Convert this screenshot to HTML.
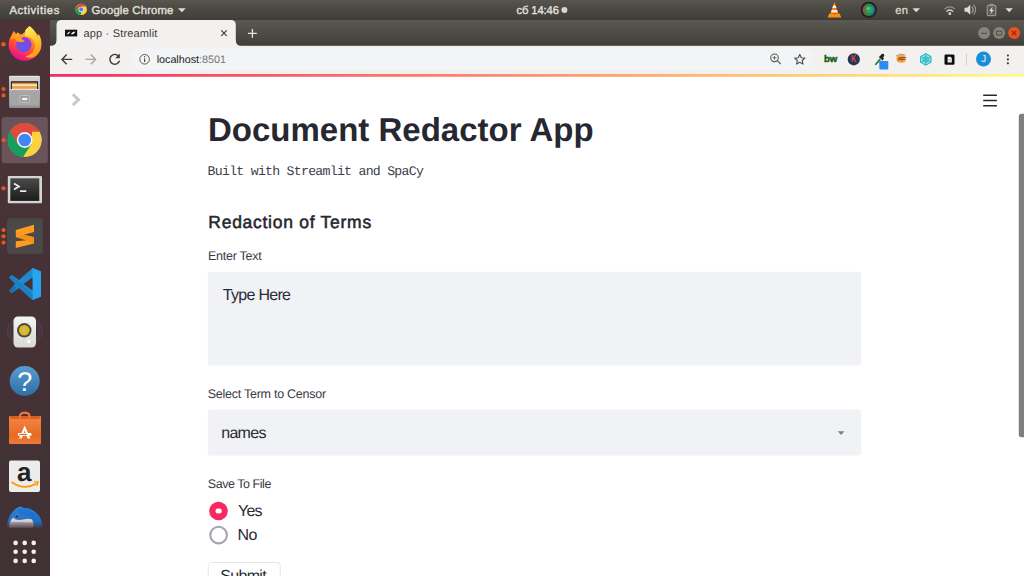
<!DOCTYPE html>
<html lang="en">
<head>
<meta charset="utf-8">
<title>app · Streamlit</title>
<style>
*{box-sizing:border-box;margin:0;padding:0}
html,body{width:1024px;height:576px;overflow:hidden;background:#fff;font-family:"Liberation Sans",sans-serif;text-rendering:geometricPrecision}
body{position:relative}
.abs{position:absolute}
#topbar{left:0;top:0;width:1024px;height:20px;background:linear-gradient(#58554e 0%,#4c4a44 40%,#42413c 85%,#3b3a36 100%);color:#e2e2df;font-weight:normal;-webkit-text-stroke:0.350px #e2e2df;font-size:11.300px;line-height:21px;white-space:nowrap}
#topbar span{position:absolute;top:0.600px}
#dock{left:0;top:20px;width:50px;height:556px;background:#4a3037}
#titlebar{left:50px;top:20px;width:974px;height:26px;background:linear-gradient(#5b5951,#3f3e3a)}
#deco{left:50px;top:74px;width:974px;height:3px;background:linear-gradient(90deg,#f72c63,#fffd80);}
#deco:after{content:"";position:absolute;left:0;top:2px;width:100%;height:1px;background:rgba(255,255,255,0.2)}
#page{left:50px;top:76px;width:974px;height:500px;background:#fff}
#app{color:#262730}
#app div{position:absolute;white-space:nowrap}
h1,h3{position:absolute;white-space:nowrap;color:#262730}
.lbl{font-size:12.500px;line-height:16px;letter-spacing:-0.250px;color:#3a3b45}
.val{font-size:16px;line-height:18px;letter-spacing:-0.700px;color:#2a2b35}
</style>
</head>
<body>
<div id="topbar" class="abs">
  <span id="act" style="left:9.400px;letter-spacing:0.600px">Activities</span>
  <span id="gc" style="left:91.500px;letter-spacing:0.180px">Google Chrome</span>
  <span id="clk" style="left:516.500px;letter-spacing:-0.150px">сб 14:46</span>
  <span id="en" style="left:895.200px;letter-spacing:0.300px;-webkit-text-stroke:0.150px #e2e2df">en</span>
</div>
<svg id="topsvg" class="abs" style="left:0;top:0" width="1024" height="20" viewBox="0 0 1024 20">
  <defs>
    <linearGradient id="globeh" x1="0" y1="0" x2="1" y2="0"><stop offset="0" stop-color="#c8402a"/><stop offset="0.35" stop-color="#2a8a4a"/><stop offset="0.65" stop-color="#1f8a5a"/><stop offset="1" stop-color="#2a62c8"/></linearGradient>
    <radialGradient id="globe" cx="0.5" cy="0.5" r="0.5"><stop offset="0" stop-color="#1f9a4a"/><stop offset="0.55" stop-color="#1a7a3e"/><stop offset="0.8" stop-color="#254a8a"/><stop offset="1" stop-color="#111"/></radialGradient>
    <linearGradient id="cone" x1="0" y1="0" x2="1" y2="0"><stop offset="0" stop-color="#ff9a1a"/><stop offset="0.5" stop-color="#ff7a00"/><stop offset="1" stop-color="#f06a00"/></linearGradient>
  </defs>
  <!-- chrome mini icon -->
  <g transform="translate(81.200,9.400)">
    <circle r="5.700" fill="#fdd23f"/>
    <path d="M-4.940 -2.850 A5.700 5.700 0 0 1 4.940 -2.850 L0 -2.850 L-2.470 1.420 Z" fill="#de4a3c"/>
    <path d="M-4.940 -2.850 L-2.470 1.420 L0 2.850 L-0.500 5.680 A5.700 5.700 0 0 1 -4.940 -2.850 Z" fill="#14a05c"/>
    <circle r="2.700" fill="#f4f4f4"/><circle r="2.100" fill="#4286f5"/>
  </g>
  <path d="M178 8.200 L185.800 8.200 L181.900 12.300 Z" fill="#dcdcda"/>
  <circle cx="564.400" cy="10" r="3" fill="#d4d4d2"/>
  <!-- vlc -->
  <path d="M834.400 1.700 L838.300 13.600 L830.500 13.600 Z" fill="url(#cone)"/>
  <path d="M833.200 5.400 L835.600 5.400 L836.400 7.900 L832.400 7.900 Z" fill="#f2f2f2"/>
  <path d="M831.700 10 L837.100 10 L837.900 12.400 L830.900 12.400 Z" fill="#e8e8e8"/>
  <path d="M829.300 13.400 L839.500 13.400 L841.300 17.400 L827.500 17.400 Z" fill="#ff8f0a"/>
  <path d="M830.500 13.400 Q834.400 15.400 838.300 13.400 Z" fill="#e06a00"/>
  <!-- globe -->
  <circle cx="868.800" cy="9.800" r="8.100" fill="#17171b"/>
  <circle cx="868.800" cy="9.800" r="6.200" fill="url(#globeh)"/>
  <circle cx="869.300" cy="9.600" r="3.600" fill="#2aa352"/>
  <circle cx="868.300" cy="8.300" r="1.600" fill="#6fd08a" fill-opacity="0.7"/>
  <circle cx="868.800" cy="9.800" r="7.100" fill="none" stroke="#3a3a40" stroke-width="0.600"/>
  <path d="M912.500 8.200 L920 8.200 L916.250 12.300 Z" fill="#dcdcda"/>
  <!-- wifi -->
  <g fill="none" stroke-width="1.500" stroke-linecap="round">
    <path d="M945 8.800 A7 7 0 0 1 954.600 8.800" stroke="#8f8e89" stroke-width="1.300"/>
    <path d="M947 11.200 A4.200 4.200 0 0 1 952.600 11.200" stroke="#d0d0cc"/>
  </g>
  <circle cx="949.800" cy="13.700" r="1.400" fill="#dcdcda"/>
  <!-- speaker -->
  <path d="M964.500 7.800 L967 7.800 L970.300 4.800 L970.300 14.800 L967 11.800 L964.500 11.800 Z" fill="#dcdcda"/>
  <g fill="none" stroke="#b4b3ae" stroke-width="1.100" stroke-linecap="round">
    <path d="M972 7.200 A3.500 3.500 0 0 1 972 12.400"/>
    <path d="M973.800 5.200 A6.500 6.500 0 0 1 973.800 14.400" stroke-opacity="0.800"/>
  </g>
  <!-- battery -->
  <rect x="987.200" y="5.300" width="8.600" height="10.300" rx="1" fill="#5e5d58" stroke="#95948f" stroke-width="1.200"/>
  <rect x="989.500" y="3.800" width="4" height="1.600" fill="#95948f"/>
  <path d="M992.600 6.500 L989.300 11 L991.300 11 L990.400 14.400 L993.800 9.700 L991.800 9.700 Z" fill="#dededa"/>
  <path d="M1005.400 8.200 L1012.900 8.200 L1009.150 12.300 Z" fill="#dcdcda"/>
</svg>
<svg id="docksvg" class="abs" style="left:0;top:20px" width="50" height="556" viewBox="0 20 50 556">
<defs>
  <linearGradient id="dkbg" x1="0" y1="0" x2="0" y2="1"><stop offset="0" stop-color="#4b3337"/><stop offset="1" stop-color="#403135"/></linearGradient>
  <linearGradient id="ffbody" x1="0.75" y1="0.1" x2="0.3" y2="1"><stop offset="0" stop-color="#ffb52a"/><stop offset="0.3" stop-color="#ff8a24"/><stop offset="0.6" stop-color="#ff4a36"/><stop offset="0.85" stop-color="#f01d78"/><stop offset="1" stop-color="#e0109a"/></linearGradient>
  <linearGradient id="ffflame" x1="0" y1="0" x2="0.3" y2="1"><stop offset="0" stop-color="#fff36a"/><stop offset="0.6" stop-color="#ffc42e"/><stop offset="1" stop-color="#ff9a1f"/></linearGradient>
  <radialGradient id="ffglobe" cx="0.4" cy="0.7" r="0.8"><stop offset="0" stop-color="#5a5cf0"/><stop offset="0.7" stop-color="#8a3fe0"/><stop offset="1" stop-color="#b43bd8"/></radialGradient>
  <linearGradient id="files" x1="0" y1="0" x2="0" y2="1"><stop offset="0" stop-color="#c9c9c9"/><stop offset="1" stop-color="#8c8c8c"/></linearGradient>
  <linearGradient id="term" x1="0" y1="0" x2="0" y2="1"><stop offset="0" stop-color="#4a4a4a"/><stop offset="1" stop-color="#1c1c1c"/></linearGradient>
  <linearGradient id="help" x1="0" y1="0" x2="0" y2="1"><stop offset="0" stop-color="#5a9bd0"/><stop offset="1" stop-color="#2d6ea6"/></linearGradient>
  <linearGradient id="bag" x1="0" y1="0" x2="0" y2="1"><stop offset="0" stop-color="#f0874a"/><stop offset="0.7" stop-color="#ea6a20"/><stop offset="1" stop-color="#ee7a38"/></linearGradient>
  <linearGradient id="spk" x1="0" y1="0" x2="0" y2="1"><stop offset="0" stop-color="#f4f4f2"/><stop offset="1" stop-color="#d8d8d4"/></linearGradient>
  <linearGradient id="tb" x1="0" y1="0" x2="0" y2="1"><stop offset="0" stop-color="#2a8ae0"/><stop offset="0.6" stop-color="#2f6fc4"/><stop offset="1" stop-color="#3a5a9a"/></linearGradient>
  <linearGradient id="tbfade" x1="0" y1="0" x2="0" y2="1"><stop offset="0" stop-color="#413136" stop-opacity="0"/><stop offset="1" stop-color="#413136" stop-opacity="0.8"/></linearGradient>
</defs>
<rect x="0" y="20" width="50" height="556" fill="url(#dkbg)"/>
<!-- firefox -->
<circle cx="3.500" cy="44.300" r="2.300" fill="#e8591c"/>
<circle cx="24.800" cy="44.600" r="16.200" fill="url(#ffbody)"/>
<path d="M7 26 L28.500 25 L26 28.800 L24.600 32.600 L21 34.500 L17.400 32.200 L16.200 34.200 L13.800 30.500 L11.300 35.600 L7 37 Z" fill="#4b3337"/>
<path d="M29.400 26 C25.500 29 24 33 25 36.500 C30 36 34.500 39 35 44.500 C35.500 50.500 31 55.500 25 56.500 C33 60.500 41.500 54 41.500 44 C41.500 39 40 36 38.600 34 C38.300 36 37.500 37 36.800 37.300 C36.300 32.500 33.500 28.500 29.400 26 Z" fill="url(#ffflame)"/>
<circle cx="23.900" cy="44.600" r="7.700" fill="url(#ffglobe)"/>
<path d="M13.800 30.800 C12.500 33 11 36.500 10.500 40 C12 38.500 13.500 38 15 38.200 C16 40.500 18 42.500 20.500 42.300 C22 42.200 23.500 41.800 24.800 41.200 C23.800 40 22.500 39.200 21 39 C22 37.200 24.500 36.200 27 36.600 C24.500 34.800 21 34.500 18.300 35.800 C16.500 35 14.800 33.300 13.800 30.800 Z" fill="#ff9a22"/>
<path d="M17.200 32.500 C18 33.500 19 34.500 20 35.200 C18.500 35.300 17 35.800 16 36.500 Z" fill="#ffb02e"/>
<!-- files -->
<circle cx="3.500" cy="89" r="2.100" fill="#e95420"/><circle cx="3.500" cy="95.400" r="2.100" fill="#e95420"/>
<rect x="9" y="75.700" width="31" height="32.300" rx="1.500" fill="url(#files)"/>
<rect x="9.300" y="76" width="30.400" height="5.200" rx="1.200" fill="#d2d2d2"/>
<rect x="9.300" y="76" width="30.400" height="1" rx="0.500" fill="#e6e6e6"/>
<rect x="11" y="81.200" width="27" height="8" fill="#2e2a26"/>
<rect x="12" y="82.800" width="25" height="6.400" fill="#f3b25e"/>
<rect x="12" y="82.800" width="25" height="1" fill="#d9822e"/>
<rect x="12" y="84.300" width="25" height="1.500" fill="#fdeccb"/>
<rect x="12" y="86.600" width="25" height="0.900" fill="#e0913e"/>
<rect x="10" y="89" width="29" height="18.300" fill="#a6a6a6"/>
<rect x="10" y="89" width="29" height="1.100" fill="#e0e0e0"/>
<rect x="10" y="105.800" width="29" height="1.500" fill="#8e8e8e"/>
<rect x="20" y="95.500" width="9.500" height="7" rx="1.500" fill="#9a9a9a" stroke="#c8c8c8" stroke-width="0.800"/>
<rect x="22" y="97.700" width="5.500" height="2.600" rx="0.800" fill="#f2f2f2"/>
<!-- chrome -->
<rect x="1.700" y="117" width="46.100" height="46.300" rx="3" fill="#6a545b"/>
<circle cx="3.500" cy="140.200" r="2.100" fill="#e95420"/>
<g transform="translate(24.700,140)">
  <circle r="16.800" fill="#fdd23f"/>
  <path d="M0 0 L-14.550 -8.400 A16.800 16.800 0 0 1 14.550 -8.400 Z" fill="#de4a3c"/>
  <path d="M-14.550 -8.400 A16.800 16.800 0 0 1 14.550 -8.400 L0 -8.400 Z" fill="#de4a3c"/>
  <path d="M0 0 L-14.550 -8.400 A16.800 16.800 0 0 0 0 16.800 Z" fill="#14a05c"/>
  <path d="M-14.550 -8.400 A16.800 16.800 0 0 0 -1.500 16.730 L7 4 L0 0 L-7.500 -4 Z" fill="#14a05c"/>
  <path d="M-1.500 16.730 L7.270 4.200 L7.270 -8.400 L14.550 -8.400 A16.800 16.800 0 0 1 -1.500 16.730 Z" fill="#fdd23f"/>
  <path d="M-14.550 -8.400 A16.800 16.800 0 0 1 14.550 -8.400 L0 -8.400 L-7.270 4.200 Z" fill="#de4a3c"/>
  <path d="M-14.550 -8.400 L-7.270 4.200 L0 8.400 L-1.500 16.730 A16.800 16.800 0 0 1 -14.550 -8.400 Z" fill="#14a05c"/>
  <circle r="7.900" fill="#f4f4f4"/>
  <circle r="6.300" fill="#4286f5"/>
</g>
<!-- terminal -->
<circle cx="3.500" cy="188.300" r="2.100" fill="#e95420"/>
<rect x="7.800" y="175.900" width="34.200" height="27.400" rx="1" fill="#d4d4d2"/>
<rect x="10.300" y="178.300" width="29" height="22.600" fill="url(#term)"/>
<path d="M14 183.500 L19 186.500 L14 189.500" fill="none" stroke="#eee" stroke-width="1.700"/>
<rect x="20" y="190.300" width="6.300" height="1.700" fill="#eee"/>
<!-- sublime -->
<circle cx="3.500" cy="230" r="2.100" fill="#e95420"/><circle cx="3.500" cy="236.300" r="2.100" fill="#e95420"/><circle cx="3.500" cy="242.600" r="2.100" fill="#e95420"/>
<rect x="7" y="218.200" width="35.800" height="35.600" rx="3" fill="#494949"/>
<path d="M15.800 230 L34 224.700 L34 231.900 L23.900 234.700 L34 236.900 L34 243.500 L15.800 248 L15.800 241.300 L26.100 240.200 L15.800 237.100 Z" fill="#ff9c1e"/>
<path d="M15.800 237.100 L26.100 240.200 L34 243.500 L34 236.900 L23.900 234.700 Z" fill="#f08a14" fill-opacity="0.6"/>
<!-- vscode -->
<path d="M32.500 268 L41 271.500 L41 296.500 L32.500 300 L19 288 L12 293 L9 291 L9 277 L12 275 L19 280 Z" fill="#1f8ad2"/>
<path d="M32.500 268 L41 271.500 L41 296.500 L32.500 300 Z" fill="#2aa4f0"/>
<path d="M32.500 277.500 L23.500 284 L32.500 290.500 Z" fill="#463138"/>
<path d="M9 277 L9 291 L15 284 Z" fill="#463138"/>
<path d="M9 277.500 L12 275.500 L32.500 294 L32.500 300 Z" fill="#1a7fc4"/>
<path d="M9 290.500 L12 292.500 L17.500 288 L14.500 285.500 Z" fill="#1574b4"/>
<!-- rhythmbox -->
<ellipse cx="24.700" cy="331" rx="17.500" ry="14" fill="none" stroke="#5a5a80" stroke-opacity="0.450" stroke-width="1"/>
<ellipse cx="24.700" cy="331" rx="15" ry="12" fill="none" stroke="#5a5a80" stroke-opacity="0.350" stroke-width="1"/>
<rect x="13.500" y="316.400" width="22.500" height="31.200" rx="4.500" fill="url(#spk)"/>
<circle cx="24.300" cy="330.300" r="7.200" fill="#4a4a3a"/>
<circle cx="24.300" cy="330.300" r="5.300" fill="#e0b81c"/>
<circle cx="24.300" cy="330.300" r="1.800" fill="#b9b9b0"/>
<circle cx="28.800" cy="341.500" r="2.300" fill="#fafafa" stroke="#d0d0cc" stroke-width="0.500"/>
<!-- help -->
<circle cx="24.700" cy="381" r="15" fill="url(#help)"/>
<text x="24.700" y="390.500" font-family="Liberation Sans, sans-serif" font-size="27" fill="#fff" text-anchor="middle">?</text>
<!-- software -->
<path d="M20 421 L20 416 Q20 412.500 24.700 412.500 Q29.500 412.500 29.500 416 L29.500 421" fill="none" stroke="#e0601c" stroke-width="2"/>
<rect x="9" y="416" width="32" height="28" rx="1" fill="url(#bag)"/>
<path d="M9.500 416 L40.500 416 L39 419 L11 419 Z" fill="#d9601e"/>
<path d="M20 421.500 L20 416.500 Q20 413 24.700 413 Q29.500 413 29.500 416.500 L29.500 421.500" fill="none" stroke="#f07a3c" stroke-width="1.600"/>
<path d="M24.700 425.500 L19 438.500 L21.800 438.500 L24.700 430.500 L27.600 438.500 L30.400 438.500 Z" fill="#fff"/>
<rect x="18" y="433" width="13.400" height="2.800" rx="0.500" fill="#fff"/>
<rect x="19.300" y="433.900" width="7.500" height="1" fill="#e0541a"/>
<!-- amazon -->
<rect x="9" y="460.400" width="31" height="31.600" rx="2" fill="#ececec"/>
<text x="24.300" y="481" font-family="Liberation Sans, sans-serif" font-weight="bold" font-size="26" fill="#222" text-anchor="middle">a</text>
<path d="M11.500 482 Q24 491 36.500 483.500" fill="none" stroke="#ff9900" stroke-width="1.800"/>
<path d="M34 481.800 L38.200 481.800 L36.800 485.800" fill="none" stroke="#ff9900" stroke-width="1.300"/>
<!-- thunderbird -->
<path d="M7.200 527.500 C7.200 518 12 509 20.500 506.600 C22 507.500 23 508 24.500 508 C34 508 42.400 516 42.600 527.500 Z" fill="url(#tb)"/>
<path d="M17 510 C22 507.500 30 509 36 514 C39 517 41 522 41.500 527.500 L36 527.500 C35 521 30 516 24 515 C21 514.500 18.500 513 17 510 Z" fill="#1a6fd0" fill-opacity="0.7"/>
<path d="M9.500 527.500 C9.500 522.500 11 519.500 13 517.500 C15.500 520 19 520.500 23 519.500 C27 518.500 30 518.300 32 519.500 C33.500 522 33.500 525 33 527.500 Z" fill="#d6d2d4"/>
<path d="M9.500 527.500 C9.500 525 10.500 523 11.500 522 L33.300 522.500 C33.500 524 33.400 526 33 527.500 Z" fill="#b4a8ac"/>
<circle cx="17" cy="516.600" r="1" fill="#3a2a1a"/>
<rect x="5" y="521" width="40" height="7" fill="url(#tbfade)"/>
<!-- apps grid -->
<g fill="#f2f0f0">
<circle cx="15.600" cy="542.900" r="2.300"/><circle cx="24.700" cy="542.900" r="2.300"/><circle cx="33.700" cy="542.900" r="2.300"/>
<circle cx="15.600" cy="551.800" r="2.300"/><circle cx="24.700" cy="551.800" r="2.300"/><circle cx="33.700" cy="551.800" r="2.300"/>
<circle cx="15.600" cy="560.900" r="2.300"/><circle cx="24.700" cy="560.900" r="2.300"/><circle cx="33.700" cy="560.900" r="2.300"/>
</g>
</svg>

<div id="titlebar" class="abs"></div>
<svg id="chromesvg" class="abs" style="left:50px;top:20px" width="974" height="56" viewBox="50 20 974 56">
  <!-- tab shape -->
  <path d="M50 46 Q56.500 46 56.500 40 L56.500 25 Q56.500 20 61.500 20 L230.800 20 Q235.800 20 235.800 25 L235.800 40 Q235.800 46 242 46 Z" fill="#f2f1f0"/>
  <rect x="50" y="45.800" width="974" height="28.200" fill="#f2f1f0"/>
  <rect x="131" y="48" width="682" height="22" rx="11" fill="#f3f4f5"/>
  <!-- favicon -->
  <rect x="65" y="29.700" width="12.200" height="6.700" fill="#111"/>
  <path d="M66.500 34.300 L69 31.800 L70.600 31.800 L68.100 34.300 Z M70.600 34.300 L73.100 31.800 L75.700 31.800 L73.200 34.300 Z" fill="#f4f4f4"/>
  <!-- tab close -->
  <path d="M221.300 30.400 L226.700 35.800 M226.700 30.400 L221.300 35.800" stroke="#3c3c3c" stroke-width="1.200" fill="none"/>
  <!-- new tab -->
  <path d="M248 33.300 L256.800 33.300 M252.400 28.900 L252.400 37.700" stroke="#e8e8e6" stroke-width="1.300" fill="none"/>
  <!-- window controls -->
  <circle cx="984.100" cy="33.100" r="6" fill="#85837b"/>
  <circle cx="999.100" cy="33.100" r="6" fill="#85837b"/>
  <circle cx="1014.100" cy="33.100" r="6" fill="#ec5020"/>
  <path d="M981.300 33.400 L986.900 33.400" stroke="#55534e" stroke-width="1.200"/>
  <rect x="996.500" y="31.200" width="5.200" height="3.800" fill="none" stroke="#55534e" stroke-width="1.100"/>
  <path d="M1011.900 30.900 L1016.300 35.300 M1016.300 30.900 L1011.900 35.300" stroke="#8a2e12" stroke-width="1.300"/>
  <!-- nav -->
  <g fill="none" stroke="#3c3c3c" stroke-width="1.400">
    <path d="M72.200 59.400 L62.200 59.400 M66.700 54.600 L61.900 59.400 L66.700 64.200"/>
    <path d="M85.300 59.400 L95.300 59.400 M90.800 54.600 L95.600 59.400 L90.800 64.200" stroke="#a8a8a6"/>
    <path d="M118.600 56.200 A4.900 4.900 0 1 0 119.500 60.700"/>
  </g>
  <path d="M119.800 53.600 L119.800 58.200 L115.200 58.200 Z" fill="#3c3c3c"/>
  <!-- info -->
  <circle cx="144.600" cy="59.300" r="4.800" fill="none" stroke="#5a5a5a" stroke-width="1"/>
  <path d="M144.600 58.400 L144.600 62" stroke="#4a4a4a" stroke-width="1.200"/>
  <circle cx="144.600" cy="56.700" r="0.700" fill="#4a4a4a"/>
  <!-- zoom -->
  <circle cx="774.500" cy="57.800" r="3.800" fill="none" stroke="#5a5a5a" stroke-width="1.100"/>
  <path d="M777.300 60.600 L780.800 64.100" stroke="#5a5a5a" stroke-width="1.300"/>
  <path d="M772.600 57.800 L776.400 57.800 M774.500 55.900 L774.500 59.700" stroke="#5a5a5a" stroke-width="0.900"/>
  <!-- star -->
  <path d="M799.800 54.400 L801.300 57.800 L804.900 58.100 L802.200 60.500 L803 64.100 L799.800 62.200 L796.600 64.100 L797.400 60.500 L794.700 58.100 L798.300 57.800 Z" fill="none" stroke="#4a4a4a" stroke-width="1.100" stroke-linejoin="round"/>
  <!-- K -->
  <circle cx="853.800" cy="59.300" r="6.100" fill="#243650"/>
  <!-- dropper -->
  <path d="M874.500 64.500 L879.500 58.500 L881 60 L876 65.200 Z" fill="#2e7d4f"/>
  <path d="M878.800 57 L882.500 60.500 L884 58.500 L880.500 55.500 Z" fill="#222"/>
  <ellipse cx="882.300" cy="55.800" rx="1.700" ry="2.200" transform="rotate(40 882.300 55.800)" fill="#222"/>
  <rect x="879.300" y="61" width="9" height="8.500" rx="1" fill="#2d8cf0"/>
  <!-- orange -->
  <ellipse cx="901.300" cy="58.800" rx="5" ry="4" fill="#f7a14a"/>
  <ellipse cx="901.300" cy="58.800" rx="2.500" ry="2" fill="#f07a1a"/>
  <path d="M896 56 Q901 52.500 905.500 55" fill="none" stroke="#8a5a2a" stroke-width="0.600"/>
  <path d="M897.500 60.500 Q901 56 906 57.500 M898 57.500 Q902 60.500 905 59.500" fill="none" stroke="#5a3a1a" stroke-width="0.700"/>
  <!-- hex -->
  <path d="M925.800 53.600 L931 56.500 L931 62.300 L925.800 65.200 L920.600 62.300 L920.600 56.500 Z" fill="#8fe0e8" stroke="#19b5c8" stroke-width="1"/>
  <circle cx="925.800" cy="59.400" r="2.600" fill="none" stroke="#19b5c8" stroke-width="0.900"/>
  <path d="M925.800 53.600 L925.800 65.200 M920.600 56.500 L931 62.300 M931 56.500 L920.600 62.300" stroke="#19a8ba" stroke-width="0.700" fill="none"/>
  <!-- black sq -->
  <rect x="944.500" y="54.400" width="10" height="10.300" rx="1.300" fill="#0c0c0c"/>
  <path d="M947.600 56.700 L950.400 56.700 L951.800 58.100 L951.800 62.600 L947.600 62.600 Z" fill="#f4f4f4"/>
  <path d="M948.500 59.500 L950.800 59.500 M948.500 61 L950.800 61" stroke="#888" stroke-width="0.500"/>
  <!-- sep -->
  <rect x="966" y="53.300" width="0.800" height="12" fill="#c8c8c8"/>
  <!-- avatar -->
  <circle cx="983.500" cy="59" r="7.500" fill="#1a8fd8"/>
  <!-- menu -->
  <circle cx="1007.900" cy="55.500" r="1.100" fill="#3c3c3c"/><circle cx="1007.900" cy="59.400" r="1.100" fill="#3c3c3c"/><circle cx="1007.900" cy="63.300" r="1.100" fill="#3c3c3c"/>
</svg>
<div class="abs" id="tabtitle" style="left:83.500px;top:25.700px;font-size:11px;line-height:16px;color:#3a3a3a;white-space:nowrap;letter-spacing:0.170px">app · Streamlit</div>
<div class="abs" id="url" style="left:156.700px;top:51.800px;font-size:10.800px;line-height:16px;color:#222;white-space:nowrap;letter-spacing:-0.030px">localhost<span style="color:#777">:8501</span></div>
<div class="abs" id="bw" style="left:824px;top:51.500px;font-size:9.600px;line-height:16px;color:#0b5a0b;font-weight:bold;-webkit-text-stroke:0.400px #0b5a0b;white-space:nowrap;letter-spacing:-0.200px">bw</div>
<div class="abs" id="kk" style="left:851px;top:52px;font-size:10.500px;line-height:15px;color:#e0464a;font-weight:bold;white-space:nowrap;transform:scaleX(0.700);transform-origin:0 0">K</div>
<div class="abs" id="jj" style="left:981.200px;top:53.400px;font-size:9.800px;line-height:14px;color:#f4f8fc;white-space:nowrap">J</div>
<div id="page" class="abs"></div>
<div id="deco" class="abs"></div>
<svg id="pagesvg" class="abs" style="left:50px;top:76px" width="974" height="500" viewBox="50 76 974 500">
  <rect x="50" y="73.900" width="974" height="0" fill="none"/>
  <!-- chevron -->
  <path d="M72.800 94.300 L78.500 99.700 L72.800 105.100" fill="none" stroke="#c6c8ce" stroke-width="3"/>
  <!-- hamburger -->
  <path d="M983.200 95.300 L996.900 95.300 M983.200 100.500 L996.900 100.500 M983.200 105.700 L996.900 105.700" stroke="#262730" stroke-width="1.400" fill="none"/>
  <!-- scrollbar -->
  <path d="M1024 113.800 L1021.500 113.800 Q1018.800 113.800 1018.800 116.500 L1018.800 434.500 Q1018.800 437.200 1021.500 437.200 L1024 437.200 Z" fill="#7f7f7f"/>
  <!-- textarea -->
  <rect x="207.800" y="271.700" width="653.400" height="93.900" rx="3" fill="#f0f2f6"/>
  <!-- select -->
  <rect x="207.800" y="409.500" width="653.400" height="46.100" rx="3" fill="#f0f2f6"/>
  <path d="M837.700 431.300 L844.500 431.300 L841.100 435.100 Z" fill="#7d7f8c"/>
  <!-- radios -->
  <circle cx="218.500" cy="511" r="9.300" fill="#f72862"/>
  <rect x="215.500" y="508.500" width="6.200" height="5" rx="2.300" fill="#fff"/>
  <circle cx="218.600" cy="535.100" r="8.300" fill="#fff" stroke="#a3a7b4" stroke-width="2.100"/>
  <!-- button -->
  <rect x="208.300" y="562.500" width="72" height="30" rx="3" fill="#fff" stroke="#e6e7eb" stroke-width="1"/>
</svg>
<div id="app">
  <h1 id="h1" style="left:208px;top:109px;font-size:33px;line-height:42px;font-weight:bold">Document Redactor App</h1>
  <div id="built" style="left:207.600px;top:163.600px;font-family:'Liberation Mono',monospace;font-size:13.200px;letter-spacing:-0.730px;line-height:16px;color:#3d3e49">Built with Streamlit and SpaCy</div>
  <h3 id="h3" style="left:208.300px;top:210px;font-size:17.500px;line-height:24px;font-weight:normal;-webkit-text-stroke:0.550px #262730;letter-spacing:0.730px">Redaction of Terms</h3>
  <div id="l1" class="lbl" style="left:208px;top:248px">Enter Text</div>
  <div id="ph" class="val" style="left:222.800px;top:286.900px">Type Here</div>
  <div id="l2" class="lbl" style="left:207.700px;top:386px">Select Term to Censor</div>
  <div id="sv" class="val" style="left:221.200px;top:424.900px">names</div>
  <div id="l3" class="lbl" style="left:207.800px;top:476px;letter-spacing:-0.450px">Save To File</div>
  <div id="yes" class="val" style="left:237.900px;top:503.200px">Yes</div>
  <div id="no" class="val" style="left:237.600px;top:527.200px">No</div>
  <div id="sub" class="val" style="left:220.300px;top:567.800px">Submit</div>
</div>
</body>
</html>
